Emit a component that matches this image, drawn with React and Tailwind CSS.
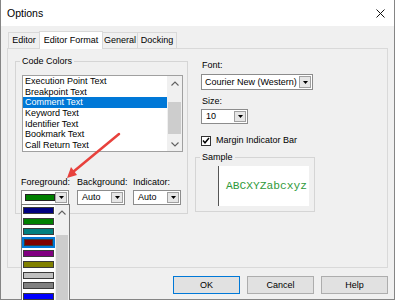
import React from 'react';

const codeColors = [
  'Execution Point Text',
  'Breakpoint Text',
  'Comment Text',
  'Keyword Text',
  'Identifier Text',
  'Bookmark Text',
  'Call Return Text',
];

const swatches = [
  'bg-[#000080]',
  'bg-[#008000]',
  'bg-[#008080]',
  'bg-[#800000]',
  'bg-[#800080]',
  'bg-[#808000]',
  'bg-[#c0c0c0]',
  'bg-[#808080]',
  'bg-[#0000ff]',
];

const Chevron = ({ up }) => (
  <svg width="8" height="5" viewBox="0 0 8 5">
    <path
      d={up ? 'M0.5 4.5 L4 1 L7.5 4.5' : 'M0.5 0.5 L4 4 L7.5 0.5'}
      fill="none"
      stroke="#606060"
      strokeWidth="1.1"
    />
  </svg>
);

const DownTri = () => (
  <svg width="5" height="3" viewBox="0 0 5 3">
    <polygon points="0,0 5,0 2.5,3" fill="#000" />
  </svg>
);

const Combo = ({ className, children }) => (
  <div className={`flex border border-[#8c8c8c] bg-white ${className}`}>
    <div className="flex-1 flex items-center pl-[3px] min-w-0">{children}</div>
    <div className="w-[12px] my-[1px] mr-[1px] bg-[#e6e6e6] border border-[#a0a0a0] flex items-center justify-center">
      <DownTri />
    </div>
  </div>
);

const Tab = ({ label, selected, className }) => (
  <div
    className={`flex items-center justify-center border border-b-0 border-[#d9d9d9] ${
      selected ? 'h-[18px] bg-white -mb-px relative z-10' : 'h-[16px] bg-[#f0f0f0]'
    } ${className}`}
  >
    {label}
  </div>
);

const Button = ({ label, primary }) => (
  <div
    className={`w-[67px] h-[18px] flex items-center justify-center bg-[#e1e1e1] ${
      primary ? 'border-[1.5px] border-[#0078d7]' : 'border border-[#adadad]'
    }`}
  >
    {label}
  </div>
);

export default function App() {
  return (
    <div className="relative w-[395px] h-[300px] overflow-hidden font-['Liberation_Sans',Arial,sans-serif] text-[9px] text-black leading-[11px]">
      <div className="w-[395px] h-[300px] bg-[#f0f0f0] border-x border-b border-[#858585] flex flex-col">
        {/* title bar */}
        <div className="h-[26px] shrink-0 bg-white flex items-center justify-between pl-[6px] pr-[9px]">
          <span className="text-[10.5px]">Options</span>
          <svg width="9" height="9" viewBox="0 0 9 9">
            <path d="M0.5 0.5 L8.5 8.5 M8.5 0.5 L0.5 8.5" stroke="#111" strokeWidth="1" />
          </svg>
        </div>

        {/* tabs */}
        <div className="mt-[5px] ml-[7px] h-[17px] flex items-end">
          <Tab label="Editor" className="w-[32px]" />
          <Tab label="Editor Format" selected className="w-[64px] -ml-px" />
          <Tab label="General" className="w-[36px] -ml-px" />
          <Tab label="Docking" className="w-[40px] -ml-px" />
        </div>

        {/* panel */}
        <div className="ml-[6px] w-[381px] h-[220px] border border-[#d9d9d9] flex items-start">
          {/* Code Colors */}
          <fieldset className="ml-[7px] mt-[7px] w-[173px] border border-[#d5d5d5] pb-[8px]">
            <legend className="ml-[4px] px-[2px] leading-[11px]">Code Colors</legend>
            <div className="ml-[6px] mt-[8px] w-[161px] h-[77px] border border-[#a0a0a0] bg-white flex">
              <div className="flex-1 flex flex-col">
                {codeColors.map((c, i) => (
                  <div
                    key={c}
                    className={`h-[10.7px] flex items-center pl-[2px] ${
                      i === 2 ? 'bg-[#0078d7] text-white' : ''
                    }`}
                  >
                    {c}
                  </div>
                ))}
              </div>
              <div className="w-[15px] bg-[#f0f0f0] flex flex-col">
                <div className="h-[15px] flex items-center justify-center">
                  <Chevron up />
                </div>
                <div className="flex-1 px-[1px] pt-[12px] pb-[3px]">
                  <div className="h-[32px] bg-[#cdcdcd]" />
                </div>
                <div className="h-[14px] flex items-center justify-center">
                  <Chevron />
                </div>
              </div>
            </div>

            <div className="ml-[5px] mt-[25px] flex gap-[8px]">
              <div className="flex flex-col gap-[2px] w-[48px]">
                <span>Foreground:</span>
                <Combo className="h-[15px] w-[48px]">
                  <div className="w-[30px] h-[7px] bg-[#008000] border border-[#222]" />
                </Combo>
              </div>
              <div className="flex flex-col gap-[2px] w-[48px]">
                <span>Background:</span>
                <Combo className="h-[15px] w-[48px]">
                  <span className="pl-[1px]">Auto</span>
                </Combo>
              </div>
              <div className="flex flex-col gap-[2px] w-[48px]">
                <span>Indicator:</span>
                <Combo className="h-[15px] w-[48px]">
                  <span className="pl-[1px]">Auto</span>
                </Combo>
              </div>
            </div>
          </fieldset>

          {/* right column */}
          <div className="ml-[7px] flex flex-col">
            <span className="ml-[7px] mt-[11px]">Font:</span>
            <Combo className="ml-[6px] mt-[3px] h-[16px] w-[112px]">
              <span className="whitespace-nowrap">Courier New (Western)</span>
            </Combo>
            <span className="ml-[7px] mt-[6px]">Size:</span>
            <Combo className="ml-[6px] mt-[2px] h-[15px] w-[47px]">
              <span className="pl-[1px]">10</span>
            </Combo>
            <div className="ml-[6px] mt-[11px] flex items-center gap-[5px]">
              <div className="w-[10px] h-[10px] border border-[#333] bg-white flex items-center justify-center">
                <svg width="8" height="7" viewBox="0 0 8 7">
                  <path d="M1 3.5 L3 5.8 L7 1" fill="none" stroke="#000" strokeWidth="1.4" />
                </svg>
              </div>
              <span>Margin Indicator Bar</span>
            </div>
            <fieldset className="mt-[6px] w-[120px] border border-[#d5d5d5] pb-[5px]">
              <legend className="ml-[4px] px-[2px] leading-[11px]">Sample</legend>
              <div className="ml-[5px] mt-[3px] w-[108px] h-[40px] bg-white flex">
                <div className="w-[18px] bg-[#f0f0f0] border-r-[1.5px] border-[#555]" />
                <div className="flex-1 flex items-center pl-[7px] font-['Liberation_Mono','Courier_New',monospace] text-[11.25px] text-[#2f9a3a]">
                  ABCXYZabcxyz
                </div>
              </div>
            </fieldset>
          </div>
        </div>

        {/* buttons */}
        <div className="mt-[8px] mr-[6px] flex justify-end gap-[7px]">
          <Button label="OK" primary />
          <Button label="Cancel" />
          <Button label="Help" />
        </div>
      </div>

      {/* open colour dropdown */}
      <div className="absolute left-[21px] top-[204px] w-[49px] h-[100px] bg-white border border-[#7a7a7a] flex">
        <div className="w-[33px] flex flex-col">
          {swatches.map((s, i) => (
            <div
              key={s}
              className={`h-[10.8px] flex items-center justify-center ${
                i === 3 ? 'border-2 border-[#0078d7]' : ''
              }`}
            >
              <div className={`w-[31px] h-[7px] border border-[#3a3a3a] ${s}`} />
            </div>
          ))}
        </div>
        <div className="w-[14px] bg-[#f0f0f0] flex flex-col">
          <div className="h-[14px] flex items-center justify-center">
            <Chevron up />
          </div>
          <div className="h-[16px]" />
          <div className="flex-1 mx-[1px] bg-[#cdcdcd]" />
        </div>
      </div>

      {/* annotation arrow */}
      <svg
        className="absolute left-0 top-0 pointer-events-none"
        width="395"
        height="300"
        viewBox="0 0 395 300"
      >
        <line x1="119" y1="134" x2="73" y2="172" stroke="#e8413c" strokeWidth="2.5" strokeLinecap="round" />
        <polygon points="67,178 77,175 71,167" fill="#e8413c" />
      </svg>
    </div>
  );
}
